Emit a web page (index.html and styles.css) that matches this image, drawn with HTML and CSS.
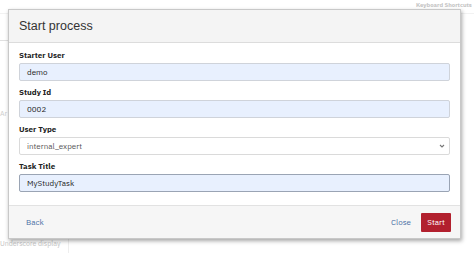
FILE: index.html
```html
<!DOCTYPE html>
<html>
<head>
<meta charset="utf-8">
<link rel="stylesheet" href="styles.css">
</head>
<body>
<div class="backdrop">
  <div class="topbar"><span class="shortcuts">Keyboard Shortcuts</span></div>
  <div class="side">
    <div class="side-item">Ar</div>
  </div>
  <div class="bottom-note">Underscore display</div>
</div>
<div class="modal">
  <div class="modal-header"><h1 class="title">Start process</h1></div>
  <div class="modal-body">
    <div class="group">
      <label class="label">Starter User</label>
      <div class="input filled">demo</div>
    </div>
    <div class="group">
      <label class="label">Study Id</label>
      <div class="input filled">0002</div>
    </div>
    <div class="group">
      <label class="label">User Type</label>
      <div class="input select"><span>internal_expert</span>
        <svg class="chev" width="6" height="4" viewBox="0 0 6 4"><path d="M1 1 L3 3 L5 1" fill="none" stroke="#777" stroke-width="1.1"/></svg>
      </div>
    </div>
    <div class="group last">
      <label class="label">Task Title</label>
      <div class="input filled focus">MyStudyTask</div>
    </div>
  </div>
  <div class="modal-footer">
    <a class="link">Back</a>
    <div class="right">
      <a class="link">Close</a>
      <button class="btn-start">Start</button>
    </div>
  </div>
</div>
</body>
</html>
```
FILE: styles.css
```css
html, body {
  margin: 0;
  padding: 0;
  background: #ffffff;
  width: 474px;
  height: 253px;
  overflow: hidden;
  font-family: "IBM Plex Sans", "Open Sans", "Noto Sans", sans-serif;
}
.backdrop {
  width: 474px;
  height: 253px;
  position: relative;
  color: #c9c9c9;
}
.topbar {
  height: 13px;
  border-bottom: 1px solid #f2f2f2;
  padding-left: 416px;
  white-space: nowrap;
  font-size: 6px;
  line-height: 10px;
}
.shortcuts {
  font-size: 6px;
  font-weight: 700;
  line-height: 10px;
  color: #c4c4c4;
}
.side {
  margin-top: 26px;
  border-top: 1px solid #e0e0e0;
  width: 20px;
}
.side-item {
  margin-top: 68px;
  font-size: 7px;
  color: #cccccc;
}
.bottom-note {
  position: absolute;
  left: 0;
  top: 238px;
  font-size: 7px;
  line-height: 12px;
  color: #c4c4c4;
  border-right: 1px solid #eee;
  padding-right: 8px;
  height: 15px;
}
.modal {
  position: absolute;
  left: 8px;
  top: 9px;
  width: 451px;
  background: #fff;
  border: 1px solid #c8c8c8;
  box-shadow: 1px 2px 4px rgba(0,0,0,0.35);
  display: flex;
  flex-direction: column;
}
.modal-header {
  height: 32px;
  background: #f4f4f4;
  border-bottom: 1px solid #dcdcdc;
  display: flex;
  align-items: center;
  padding: 0 10px;
}
.title {
  margin: 0;
  font-family: "Liberation Sans", Arial, sans-serif;
  font-weight: 400;
  font-size: 12.5px;
  color: #333;
}
.modal-body {
  padding: 7px 10px 13px 10px;
  display: flex;
  flex-direction: column;
  gap: 6px;
}
.group {
  display: flex;
  flex-direction: column;
}
.label {
  font-size: 8px;
  font-weight: 700;
  line-height: 11px;
  color: #222;
  margin-bottom: 2px;
}
.input {
  height: 16px;
  border: 1px solid #cfd3da;
  border-radius: 2px;
  padding: 0 7px;
  display: flex;
  align-items: center;
  font-size: 8px;
  color: #222;
}
.filled {
  background: #e8f0fe;
}
.focus {
  border-color: #9aa4b4;
}
.select {
  background: #fff;
  border-color: #dadada;
  color: #555;
  justify-content: space-between;
  padding-right: 4px;
}
.chev {
  display: block;
}
.modal-footer {
  height: 32px;
  background: #f6f6f6;
  border-top: 1px solid #e2e2e2;
  display: flex;
  align-items: center;
  justify-content: space-between;
  padding: 0 9px 0 17px;
}
.right {
  display: flex;
  align-items: center;
  gap: 10px;
}
.link {
  font-size: 8px;
  color: #4a6fa5;
}
.btn-start {
  height: 19px;
  width: 30px;
  border: none;
  border-radius: 1px;
  background: #b2202e;
  color: #fff;
  font-family: "IBM Plex Sans", "Open Sans", "Noto Sans", sans-serif;
  font-size: 8px;
  padding: 0;
}
```
